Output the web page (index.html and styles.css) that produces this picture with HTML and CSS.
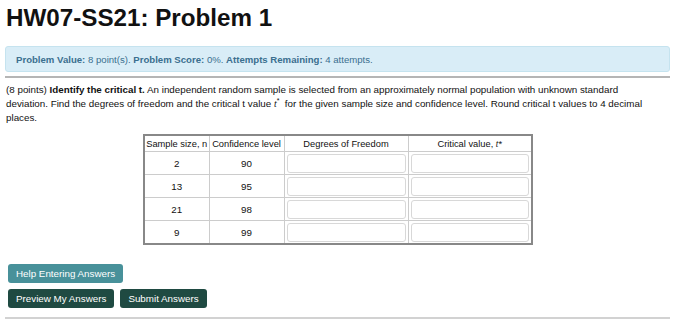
FILE: index.html
```html
<!DOCTYPE html>
<html lang="en">
<head>
  <meta charset="UTF-8" />
  <title>HW07-SS21: Problem 1</title>
  <link rel="stylesheet" href="styles.css">
</head>
<body>
  <h1>HW07-SS21: Problem 1</h1>

  <div class="info">
    <b>Problem Value:</b> 8 point(s). <b>Problem Score:</b> 0%. <b>Attempts Remaining:</b> 4 attempts.
  </div>

  <div class="problem">
    <p>(8 points) <b>Identify the critical t.</b> An independent random sample is selected from an approximately normal population with unknown standard deviation. Find the degrees of freedom and the critical t value <i class="math">t</i><sup>*</sup>&nbsp; for the given sample size and confidence level. Round critical t values to 4 decimal places.</p>

    <table class="answers">
      <colgroup>
        <col class="c-n">
        <col class="c-cl">
        <col class="c-df">
        <col class="c-t">
      </colgroup>
      <tr>
        <th>Sample size, n</th>
        <th>Confidence level</th>
        <th>Degrees of Freedom</th>
        <th>Critical value, <i class="math">t</i>*</th>
      </tr>
      <tr><td>2</td><td>90</td><td><input type="text"></td><td><input type="text"></td></tr>
      <tr><td>13</td><td>95</td><td><input type="text"></td><td><input type="text"></td></tr>
      <tr><td>21</td><td>98</td><td><input type="text"></td><td><input type="text"></td></tr>
      <tr><td>9</td><td>99</td><td><input type="text"></td><td><input type="text"></td></tr>
    </table>
  </div>

  <div class="buttons">
    <div><button class="btn help">Help Entering Answers</button></div>
    <div class="row">
      <button class="btn dark">Preview My Answers</button>
      <button class="btn dark">Submit Answers</button>
    </div>
  </div>
</body>
</html>
```

FILE: styles.css
```css
:root {
  --info-bg: #d9edf7;
  --info-border: #c5e3ef;
  --info-text: #3b6f8f;
  --teal: #48919a;
  --dark: #1f4a42;
  --rule: #b5b5b5;
}

body {
  font-family: "Liberation Sans", Arial, sans-serif;
  margin: 0;
  padding: 0 30px 0 5px;
  color: #111;
  background: #fff;
}

h1 {
  margin: 0;
  padding: 5px 0 0 1px;
  font-size: 24.2px;
  line-height: 26px;
  font-weight: bold;
}

.info {
  margin-top: 15px;
  height: 26px;
  box-sizing: border-box;
  padding: 0 10px;
  line-height: 25px;
  background: var(--info-bg);
  border: 1px solid var(--info-border);
  border-radius: 3px;
  color: var(--info-text);
  font-size: 9.6px;
}

.problem {
  margin-top: 4px;
  border-top: 2px solid var(--rule);
  padding-top: 5px;
}

.problem p {
  margin: 0;
  padding: 0 20px 0 1px;
  font-size: 9.8px;
  line-height: 14px;
}

.math {
  font-family: "Liberation Serif", serif;
}

sup {
  font-size: 7px;
  line-height: 0;
}

.answers {
  margin: 9px 0 0 138px;
  table-layout: fixed;
  width: 388px;
  border-collapse: collapse;
  border: 2px solid #888;
  font-size: 9.8px;
}

.c-n { width: 65px; }
.c-cl { width: 75px; }
.c-df, .c-t { width: 124px; }

.answers th {
  font-weight: normal;
  font-size: 9.3px;
  height: 15px;
  padding: 0;
  border: 1px solid #ccc;
  white-space: nowrap;
  overflow: hidden;
}

.answers td {
  height: 22px;
  padding: 0 2px;
  border: 1px solid #ccc;
  text-align: center;
}

.answers input {
  display: block;
  width: 100%;
  height: 19px;
  box-sizing: border-box;
  border: 1px solid #d8d8d8;
  border-radius: 3px;
  background: #fff;
}

.buttons {
  margin-top: 18px;
  padding: 0 0 9px 3px;
  border-bottom: 2px solid #d2d2d2;
  display: flex;
  flex-direction: column;
  gap: 6px;
}

.row {
  display: flex;
  gap: 6px;
}

.btn {
  font-family: "Liberation Sans", Arial, sans-serif;
  font-size: 9.8px;
  height: 19px;
  padding: 0 8px;
  border: none;
  border-radius: 3px;
  color: #fff;
}

.help {
  background: var(--teal);
}

.dark {
  background: var(--dark);
}
```
